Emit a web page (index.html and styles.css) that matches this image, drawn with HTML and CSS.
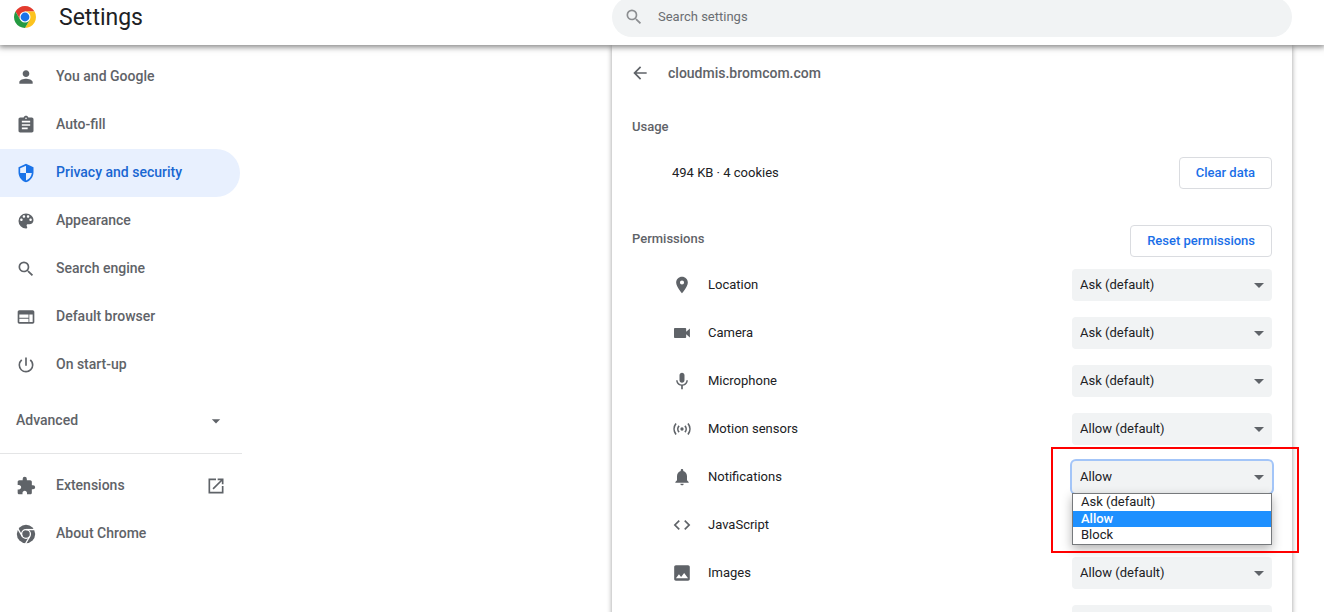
FILE: index.html
```html
<!DOCTYPE html>
<html lang="en-GB">
<head>
<meta charset="utf-8">
<title>Settings</title>
<link rel="stylesheet" href="styles.css">
</head>
<body>
<header class="toolbar">
  <div class="brand">
    <svg class="logo" viewBox="2 2 44 44" aria-hidden="true">
      <path fill="#e33b2e" d="M4.95 13A22 22 0 0 1 43.05 13H24L14.47 29.5Z"/>
      <path fill="#fcc31e" d="M43.05 13A22 22 0 0 1 24 46L33.53 29.5 24 13Z"/>
      <path fill="#249a41" d="M24 46A22 22 0 0 1 4.95 13L14.47 29.5H33.53Z"/>
      <circle cx="24" cy="24" r="11" fill="#fff"/>
      <circle cx="24" cy="24" r="8.8" fill="#1a73e8"/>
    </svg>
    <h1 class="title">Settings</h1>
  </div>
  <label class="search">
    <svg class="icon" viewBox="0 0 24 24" aria-hidden="true"><path d="M15.5 14h-.79l-.28-.27A6.47 6.47 0 0 0 16 9.5 6.5 6.5 0 1 0 9.5 16c1.61 0 3.09-.59 4.23-1.57l.27.28v.79l5 4.99L20.49 19l-4.99-5zm-6 0C7.01 14 5 11.99 5 9.5S7.01 5 9.5 5 14 7.01 14 9.5 11.99 14 9.5 14z"/></svg>
    <input class="search-input" type="search" placeholder="Search settings" aria-label="Search settings">
  </label>
</header>
<div class="page">
  <nav class="sidebar">
    <a class="nav-item" href="#"><svg class="icon" viewBox="0 0 24 24"><path d="M12 12c2.21 0 4-1.79 4-4s-1.79-4-4-4-4 1.79-4 4 1.790 4 4 4zm0 2c-2.670 0-8 1.340-8 4v2h16v-2c0-2.660-5.330-4-8-4z"/></svg><span>You and Google</span></a>
    <a class="nav-item" href="#"><svg class="icon" viewBox="0 0 24 24"><path d="M19 3h-4.180C14.400 1.840 13.300 1 12 1c-1.300 0-2.400.84-2.820 2H5c-1.100 0-2 .9-2 2v14c0 1.100.9 2 2 2h14c1.100 0 2-.9 2-2V5c0-1.100-.9-2-2-2zm-7 0c.55 0 1 .45 1 1s-.45 1-1 1-1-.45-1-1 .45-1 1-1zm2 14H7v-2h7v2zm3-4H7v-2h10v2zm0-4H7V7h10v2z"/></svg><span>Auto-fill</span></a>
    <a class="nav-item active" href="#" aria-current="page"><svg class="icon" viewBox="0 0 24 24"><path d="M12 1 3 5v6c0 5.550 3.840 10.740 9 12 5.160-1.260 9-6.450 9-12V5l-9-4zm0 10.990h7c-.53 4.120-3.280 7.790-7 8.940V12H5V6.300l7-3.110v8.800z"/></svg><span>Privacy and security</span></a>
    <a class="nav-item" href="#"><svg class="icon" viewBox="0 0 24 24"><path d="M12 3a9 9 0 0 0 0 18c.83 0 1.500-.67 1.500-1.500 0-.39-.15-.74-.39-1.010-.23-.26-.38-.61-.38-.99 0-.83.67-1.500 1.500-1.500H16c2.760 0 5-2.240 5-5 0-4.420-4.030-8-9-8zm-5.500 9c-.83 0-1.500-.67-1.500-1.500S5.670 9 6.500 9 8 9.670 8 10.500 7.330 12 6.500 12zm3-4C8.670 8 8 7.330 8 6.500S8.670 5 9.500 5s1.500.67 1.500 1.500S10.330 8 9.500 8zm5 0c-.83 0-1.500-.67-1.500-1.500S13.670 5 14.500 5s1.500.67 1.500 1.500S15.330 8 14.500 8zm3 4c-.83 0-1.500-.67-1.500-1.500S16.670 9 17.500 9s1.500.67 1.500 1.500-.67 1.500-1.500 1.500z"/></svg><span>Appearance</span></a>
    <a class="nav-item" href="#"><svg class="icon" viewBox="0 0 24 24"><path d="M15.500 14h-.79l-.28-.27A6.470 6.470 0 0 0 16 9.500 6.500 6.500 0 1 0 9.500 16c1.610 0 3.090-.59 4.230-1.570l.27.28v.79l5 4.990L20.490 19l-4.990-5zm-6 0C7.010 14 5 11.990 5 9.500S7.010 5 9.500 5 14 7.010 14 9.500 11.990 14 9.500 14z"/></svg><span>Search engine</span></a>
    <a class="nav-item" href="#"><svg class="icon" viewBox="0 0 24 24"><path d="M20 4H4c-1.100 0-1.990.9-1.990 2L2 18c0 1.100.9 2 2 2h16c1.100 0 2-.9 2-2V6c0-1.100-.9-2-2-2zm-5 14H4v-4h11v4zm0-5H4V9h11v4zm5 5h-4V9h4v9z"/></svg><span>Default browser</span></a>
    <a class="nav-item" href="#"><svg class="icon" viewBox="0 0 24 24"><path d="M13 3h-2v10h2V3zm4.830 2.170-1.420 1.420A6.920 6.920 0 0 1 19 12c0 3.870-3.130 7-7 7A6.995 6.995 0 0 1 7.580 6.580L6.170 5.170A8.932 8.932 0 0 0 3 12a9 9 0 0 0 18 0c0-2.740-1.230-5.180-3.170-6.830z"/></svg><span>On start-up</span></a>
    <button class="advanced" type="button"><span>Advanced</span><svg class="icon" viewBox="0 0 24 24"><path d="m7 10 5 5 5-5z"/></svg></button>
    <hr class="divider">
    <a class="nav-item" href="#"><svg class="icon" viewBox="0 0 24 24"><path d="M20.500 11H19V7c0-1.100-.9-2-2-2h-4V3.500a2.500 2.500 0 0 0-5 0V5H4c-1.100 0-1.990.9-1.990 2v3.800H3.500c1.490 0 2.700 1.210 2.700 2.700s-1.210 2.700-2.700 2.700H2V20c0 1.100.9 2 2 2h3.800v-1.500c0-1.490 1.210-2.700 2.700-2.700s2.700 1.210 2.700 2.700V22H17c1.100 0 2-.9 2-2v-4h1.500a2.500 2.500 0 0 0 0-5z"/></svg><span>Extensions</span><svg class="icon external" viewBox="0 0 24 24"><path d="M19 19H5V5h7V3H3v18h18v-9h-2v7zM14 3v2h3.590l-9.830 9.830 1.410 1.410L19 6.410V10h2V3h-7z"/></svg></a>
    <a class="nav-item" href="#"><svg class="icon" viewBox="0 0 24 24"><circle cx="12" cy="12" r="11"/><g fill="none" stroke="#fff" stroke-width="1.600"><circle cx="12" cy="12" r="5.300"/><path id="blade" d="M12 6.700H22.500"/><use href="#blade" transform="rotate(120 12 12)"/><use href="#blade" transform="rotate(240 12 12)"/></g></svg><span>About Chrome</span></a>
  </nav>
  <main class="main">
    <section class="card">
      <div class="site-header">
        <button class="back" type="button" aria-label="Back"><svg class="icon" viewBox="0 0 24 24"><path d="M20 11H7.830l5.590-5.590L12 4l-8 8 8 8 1.410-1.410L7.830 13H20v-2z"/></svg></button>
        <h2 class="site">cloudmis.bromcom.com</h2>
      </div>
      <h3 class="section-title">Usage</h3>
      <div class="usage">
        <span>494 KB · 4 cookies</span>
        <button class="action" type="button">Clear data</button>
      </div>
      <div class="permissions-header">
        <h3 class="section-title">Permissions</h3>
        <button class="action" type="button">Reset permissions</button>
      </div>
      <div class="row">
        <svg class="icon" viewBox="0 0 24 24"><path d="M12 2C8.130 2 5 5.130 5 9c0 5.250 7 13 7 13s7-7.750 7-13c0-3.870-3.130-7-7-7zm0 9.500a2.500 2.500 0 0 1 0-5 2.500 2.500 0 0 1 0 5z"/></svg>
        <label class="row-label" for="location">Location</label>
        <div class="picker"><select id="location"><option>Ask (default)</option></select></div>
      </div>
      <div class="row">
        <svg class="icon" viewBox="0 0 24 24"><path d="M17 10.500V7c0-.55-.45-1-1-1H3.400c-.55 0-1 .45-1 1v10c0 .55.45 1 1 1H16c.55 0 1-.45 1-1v-3.500l4.500 4v-11l-4.500 4z"/></svg>
        <label class="row-label" for="camera">Camera</label>
        <div class="picker"><select id="camera"><option>Ask (default)</option></select></div>
      </div>
      <div class="row">
        <svg class="icon" viewBox="0 0 24 24"><path d="M12 14c1.660 0 2.990-1.340 2.990-3L15 5c0-1.660-1.340-3-3-3S9 3.340 9 5v6c0 1.660 1.340 3 3 3zm5.300-3c0 3-2.540 5.100-5.300 5.100S6.700 14 6.700 11H5c0 3.410 2.720 6.230 6 6.720V22h2v-4.280c3.280-.48 6-3.300 6-6.720h-1.700z"/></svg>
        <label class="row-label" for="microphone">Microphone</label>
        <div class="picker"><select id="microphone"><option>Ask (default)</option></select></div>
      </div>
      <div class="row">
        <svg class="icon" viewBox="0 0 24 24"><circle cx="12" cy="12" r="2"/><path fill="none" stroke="currentColor" stroke-width="2" d="M8.500 8.200a5.600 5.600 0 0 0 0 7.600M15.500 8.200a5.600 5.600 0 0 1 0 7.600M4.800 5.500a10.500 10.500 0 0 0 0 13M19.200 5.500a10.500 10.500 0 0 1 0 13"/></svg>
        <label class="row-label" for="motion">Motion sensors</label>
        <div class="picker"><select id="motion"><option>Allow (default)</option></select></div>
      </div>
      <div class="row">
        <svg class="icon" viewBox="0 0 24 24"><path d="M12 22c1.100 0 2-.9 2-2h-4a2 2 0 0 0 2 2zm6-6v-5c0-3.070-1.640-5.640-4.500-6.320V4c0-.83-.67-1.500-1.500-1.500s-1.500.67-1.500 1.500v.68C7.630 5.360 6 7.920 6 11v5l-2 2v1h16v-1l-2-2z"/></svg>
        <label class="row-label" for="notifications">Notifications</label>
        <div class="picker open">
          <select id="notifications"><option>Allow</option></select>
          <ul class="menu" role="listbox" aria-label="Notifications">
            <li class="option" role="option">Ask (default)</li>
            <li class="option selected" role="option" aria-selected="true">Allow</li>
            <li class="option" role="option">Block</li>
          </ul>
          <div class="callout"></div>
        </div>
      </div>
      <div class="row">
        <svg class="icon" viewBox="0 0 24 24"><path d="M9.400 16.600 4.800 12l4.600-4.600L8 6l-6 6 6 6 1.400-1.400zm5.200 0 4.600-4.600-4.600-4.600L16 6l6 6-6 6-1.400-1.400z"/></svg>
        <label class="row-label" for="javascript">JavaScript</label>
        <div class="picker"><select id="javascript"></select></div>
      </div>
      <div class="row">
        <svg class="icon" viewBox="0 0 24 24"><path d="M21 19V5c0-1.100-.9-2-2-2H5c-1.100 0-2 .9-2 2v14c0 1.100.9 2 2 2h14c1.100 0 2-.9 2-2zM8.500 13.500l2.500 3.010L14.500 12l4.500 6H5l3.500-4.500z" transform="matrix(1.040 0 0 1.040 -.5 -.5)"/></svg>
        <label class="row-label" for="images">Images</label>
        <div class="picker"><select id="images"><option>Allow (default)</option></select></div>
      </div>
      <div class="row">
        <div class="picker"><select aria-label="More"></select></div>
      </div>
    </section>
  </main>
</div>
</body>
</html>
```

FILE: styles.css
```css
* {
  box-sizing: border-box;
}

body {
  margin: 0;
  height: 100vh;
  display: flex;
  flex-direction: column;
  overflow: hidden;
  background: #fff;
  color: #202124;
  font: 13px/20px Roboto, sans-serif;
}

h1, h2, h3, ul {
  margin: 0;
  padding: 0;
}

button, input, select {
  font: inherit;
}

.icon {
  flex: none;
  display: block;
  width: 20px;
  height: 20px;
  fill: currentColor;
  color: #5f6368;
}

/* Toolbar */
.toolbar {
  flex: none;
  display: flex;
  justify-content: space-between;
  align-items: flex-start;
  height: 45px;
  padding: 0 32px 0 14px;
  background: #fff;
  box-shadow: 0 1px 6px 1px rgba(0, 0, 0, 0.5);
  z-index: 1;
}

.brand {
  display: flex;
  align-items: center;
  gap: 23px;
  height: 34px;
}

.logo {
  width: 22px;
  height: 22px;
}

.title {
  padding-top: 2px;
  font-size: 23px;
  font-weight: 400;
  line-height: 32px;
}

.search {
  display: flex;
  align-items: center;
  gap: 14px;
  flex: 0 1 680px;
  height: 40px;
  margin-top: -3px;
  padding: 0 12px;
  border-radius: 20px;
  background: #f1f3f4;
}

.search .icon {
  color: #8c8e91;
}

.search-input {
  flex: 1;
  min-width: 0;
  padding: 0;
  border: 0;
  outline: 0;
  background: none;
  color: #202124;
}

.search-input::placeholder {
  color: #6b6e72;
  opacity: 1;
}

/* Sidebar */
.page {
  flex: 1;
  min-height: 0;
  display: flex;
  overflow: hidden;
}

.sidebar {
  flex: none;
  width: 242px;
  padding-top: 8px;
  font-size: 14px;
  font-weight: 500;
}

.nav-item {
  display: flex;
  align-items: center;
  gap: 20px;
  height: 48px;
  margin-right: 2px;
  padding: 0 14px 0 16px;
  border-radius: 0 24px 24px 0;
  color: #5f6368;
  text-decoration: none;
}

.nav-item span,
.advanced span {
  padding-bottom: 2px;
}

.nav-item.active {
  background: #e8f0fe;
  color: #1967d2;
}

.nav-item.active .icon {
  color: #1a73e8;
}

.external {
  margin-left: auto;
}

.advanced {
  display: flex;
  align-items: center;
  justify-content: space-between;
  width: 240px;
  height: 48px;
  margin: 8px 0;
  padding: 0 14px 0 16px;
  border: 0;
  background: none;
  color: #5f6368;
}

.divider {
  height: 1px;
  margin: 0 0 8px;
  border: 0;
  background: #e4e5e6;
}

/* Site details */
.main {
  flex: 1;
  min-width: 0;
  padding-right: 32px;
}

.card {
  max-width: 680px;
  margin-left: auto;
  padding: 4px 20px 0;
  box-shadow: 0 1px 5px rgba(0, 0, 0, 0.4);
}

.site-header {
  display: flex;
  align-items: center;
  gap: 18px;
  height: 48px;
}

.back {
  margin-left: -2px;
  padding: 0;
  border: 0;
  background: none;
}

.site {
  color: #5f6368;
  font-size: 14px;
  font-weight: 500;
}

.section-title {
  color: #5f6368;
  font-size: 13px;
  font-weight: 500;
}

.site-header + .section-title {
  padding-top: 20px;
}

.usage {
  display: flex;
  align-items: center;
  justify-content: space-between;
  margin-top: 20px;
  padding-left: 40px;
}

.permissions-header {
  display: flex;
  align-items: flex-start;
  justify-content: space-between;
  padding: 36px 0 4px;
}

.permissions-header .section-title {
  padding-top: 4px;
}

.action {
  height: 32px;
  padding: 0 16px;
  border: 1px solid #dadce0;
  border-radius: 4px;
  background: #fff;
  color: #1a6fe8;
  font-weight: 500;
}

.row {
  display: flex;
  align-items: center;
  gap: 16px;
  height: 48px;
  padding-left: 40px;
}

.picker {
  position: relative;
  width: 200px;
  height: 32px;
  margin-left: auto;
}

.picker select {
  width: 100%;
  height: 100%;
  padding: 0 32px 0 8px;
  border: 0;
  border-radius: 4px;
  outline: 0;
  appearance: none;
  background: #f1f3f4;
  color: #202124;
}

.picker::after {
  content: "";
  position: absolute;
  top: 14px;
  right: 8px;
  border: 5px solid transparent;
  border-top-color: #5f6368;
  border-bottom: 0;
  pointer-events: none;
}

.picker.open select {
  box-shadow: 0 0 0 2px #a3c5f8;
}

.menu {
  position: absolute;
  z-index: 1;
  top: 32px;
  left: 0;
  width: 100%;
  border: 1px solid #76797c;
  background: #fff;
  box-shadow: 0 4px 10px rgba(0, 0, 0, 0.3);
  list-style: none;
}

.option {
  padding: 0 8px;
  line-height: 16px;
}

.option:first-child,
.option:last-child {
  padding-bottom: 1px;
}

.option.selected {
  background: #1e90ff;
  color: #fff;
  font-weight: 500;
}

.callout {
  position: absolute;
  z-index: 2;
  top: -14px;
  left: -21px;
  width: 248px;
  height: 106px;
  border: 2px solid #f00;
  pointer-events: none;
}
```
